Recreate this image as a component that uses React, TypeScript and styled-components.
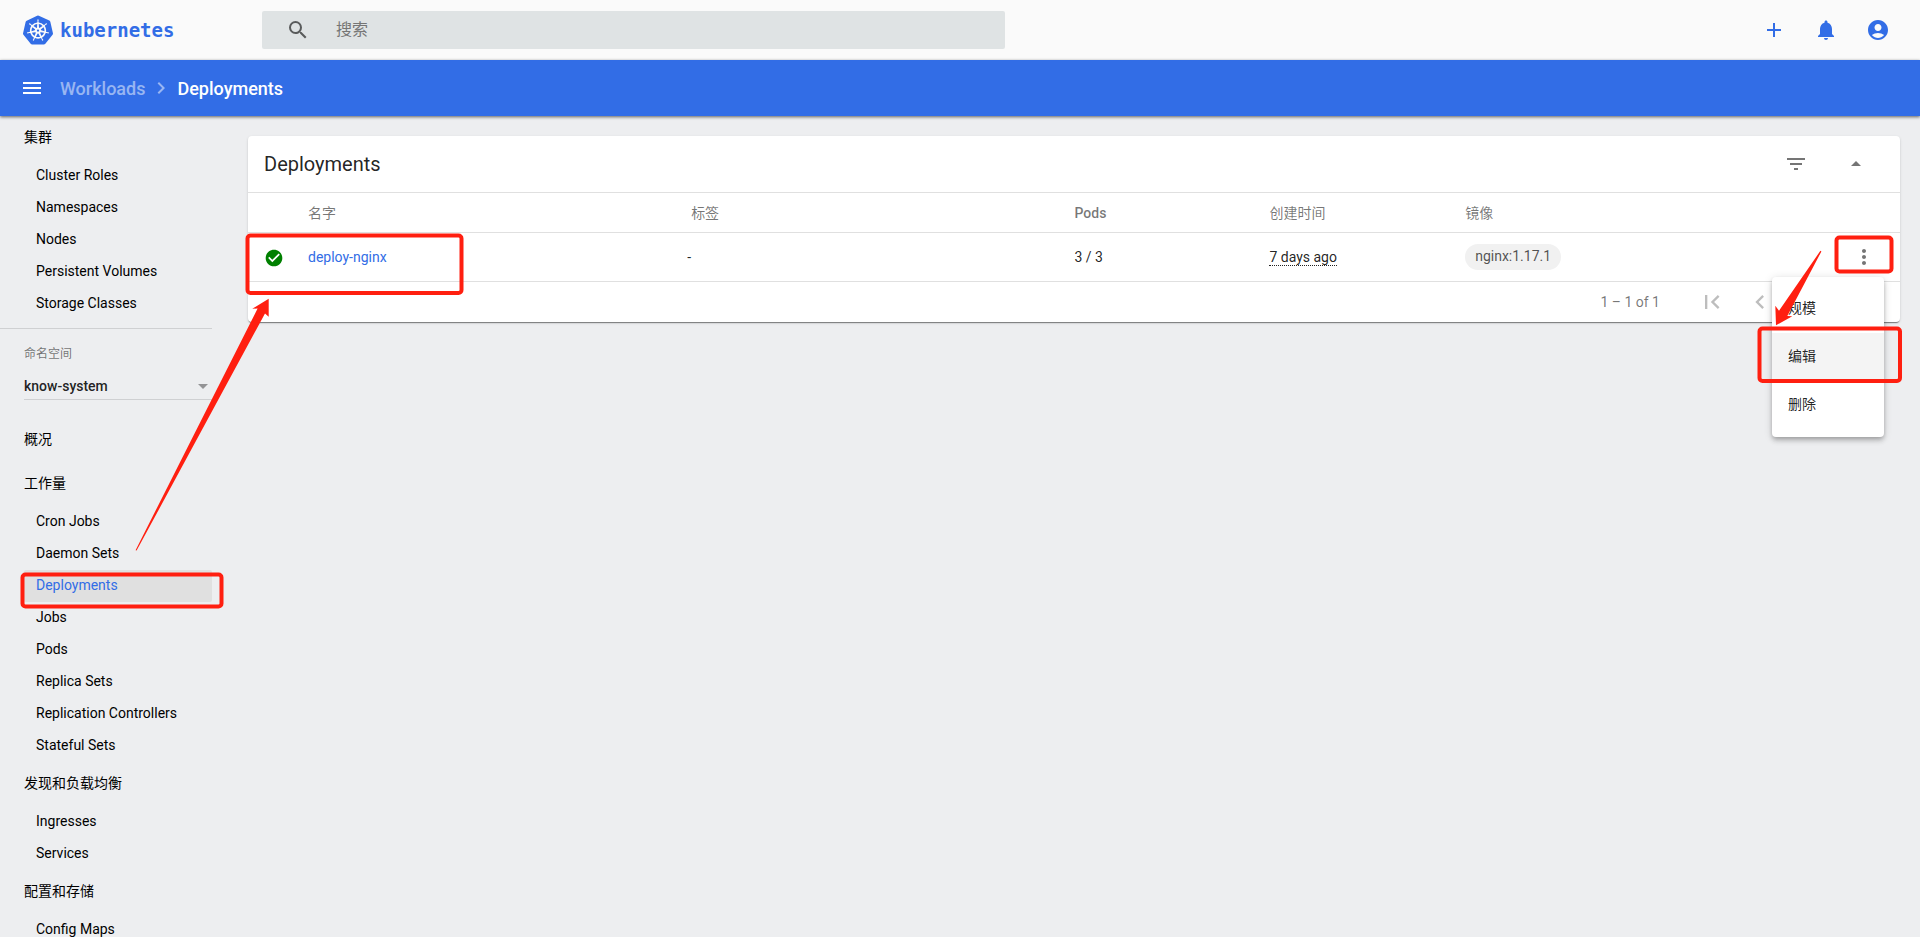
import React from 'react';
import styled, { createGlobalStyle } from 'styled-components';
import {
  MdAccountCircle,
  MdAdd,
  MdArrowDropDown,
  MdArrowDropUp,
  MdCheckCircle,
  MdChevronLeft,
  MdChevronRight,
  MdFilterList,
  MdFirstPage,
  MdLastPage,
  MdMenu,
  MdMoreVert,
  MdNotifications,
  MdSearch,
} from 'react-icons/md';
import { SiKubernetes } from 'react-icons/si';

const primary = '#326de6';
const marker = '#ff1f10';
const border = '#e0e0e0';
const secondaryText = 'rgba(0, 0, 0, 0.54)';

const GlobalStyle = createGlobalStyle`
  *, *::before, *::after { box-sizing: border-box; }
  body {
    margin: 0;
    background: #edeef0;
    color: rgba(0, 0, 0, 0.87);
    font-family: Roboto, "Noto Sans CJK SC", sans-serif;
    font-size: 14px;
    line-height: 20px;
  }
  button, input, select { font: inherit; color: inherit; }
`;

const Page = styled.div`
  position: relative;
  display: flex;
  flex-direction: column;
  height: 100vh;
  overflow: hidden;
`;

const TopBar = styled.header`
  display: flex;
  flex: none;
  align-items: center;
  height: 60px;
  padding: 0 16px 0 23px;
  background: #fafafa;
`;

const Brand = styled.a`
  display: flex;
  flex: none;
  align-items: center;
  gap: 7px;
  width: 239px;
  color: ${primary};
  font: bold 19px/24px "DejaVu Sans Mono", monospace;
  text-decoration: none;
`;

const SearchBox = styled.label`
  display: flex;
  flex: 0 1 743px;
  align-items: center;
  gap: 26px;
  height: 38px;
  padding: 0 24px;
  border-radius: 2px;
  background: #dfe3e4;
  color: rgba(0, 0, 0, 0.6);
`;

const SearchInput = styled.input`
  flex: 1;
  min-width: 0;
  padding: 0;
  border: 0;
  outline: 0;
  background: none;
  font-size: 16px;
  &::placeholder { color: #757575; opacity: 1; }
`;

const TopActions = styled.div`
  display: flex;
  margin-left: auto;
  color: ${primary};
`;

const IconButton = styled.button<{ $width?: number }>`
  display: flex;
  flex: none;
  align-items: center;
  justify-content: center;
  width: ${({ $width = 40 }) => $width}px;
  height: 40px;
  padding: 0;
  border: 0;
  background: none;
  color: inherit;
  cursor: pointer;
  &:disabled { color: rgba(0, 0, 0, 0.26); cursor: default; }
`;

const ActionBar = styled.div`
  position: relative;
  display: flex;
  flex: none;
  align-items: center;
  height: 56px;
  padding: 0 12px;
  background: ${primary};
  color: #fff;
  box-shadow: 0 1px 3px rgba(0, 0, 0, 0.6);
`;

const Breadcrumbs = styled.nav`
  display: flex;
  align-items: center;
  gap: 4px;
  margin-left: 8px;
  font-size: 18px;
  font-weight: 500;
  color: rgba(255, 255, 255, 0.5);
`;

const Crumb = styled.a<{ $current?: boolean }>`
  padding-top: 2px;
  color: ${({ $current }) => ($current ? '#fff' : 'inherit')};
  text-decoration: none;
`;

const Body = styled.div`
  display: flex;
  flex: 1;
  min-height: 0;
`;

const Sidebar = styled.nav`
  flex: none;
  width: 228px;
  padding-right: 16px;
  overflow-y: auto;
  scrollbar-width: none;
  color: #000;
`;

const GroupTitle = styled.a`
  display: block;
  padding: 0 0 2px 24px;
  line-height: 42px;
  color: inherit;
  text-decoration: none;
`;

const NavLink = styled.a<{ $active?: boolean }>`
  display: block;
  margin-left: 24px;
  padding: 0 0 2px 12px;
  border-radius: 2px;
  line-height: 30px;
  background: ${({ $active }) => ($active ? '#e0e0e0' : 'none')};
  color: ${({ $active }) => ($active ? primary : 'inherit')};
  text-decoration: none;
`;

const NamespaceField = styled.div`
  display: flex;
  flex-direction: column;
  margin: 8px 0 18px;
  padding: 15px 0 0 24px;
  border-top: 1px solid #cfd0d2;
`;

const NamespaceLabel = styled.label`
  color: ${secondaryText};
  font-size: 12px;
`;

const SelectWrap = styled.div`
  display: flex;
  align-items: center;
  margin-top: 8px;
  border-bottom: 1px solid #cfd0d2;
  color: ${secondaryText};
`;

const NamespaceSelect = styled.select`
  flex: 1;
  height: 27px;
  margin-right: -24px;
  padding: 0 24px 0 0;
  border: 0;
  outline: 0;
  appearance: none;
  background: none;
  color: rgba(0, 0, 0, 0.87);
  font-weight: 500;
`;

const SelectArrow = styled(MdArrowDropDown)`
  flex: none;
  margin-right: -3px;
  opacity: 0.7;
  pointer-events: none;
`;

const Content = styled.main`
  flex: 1;
  min-width: 0;
  padding: 20px;
`;

const Card = styled.section`
  border-radius: 4px;
  background: #fff;
  box-shadow: 0 2px 1px -1px rgba(0, 0, 0, 0.35), 0 1px 1px rgba(0, 0, 0, 0.14),
    0 1px 3px rgba(0, 0, 0, 0.12);
`;

const CardHeader = styled.header`
  display: flex;
  align-items: center;
  height: 57px;
  padding: 0 14px 0 16px;
  border-bottom: 1px solid ${border};
  color: ${secondaryText};
`;

const CardTitle = styled.h1`
  margin: 0 auto 0 0;
  color: rgba(0, 0, 0, 0.87);
  font-size: 20px;
  font-weight: 400;
  line-height: 24px;
`;

const Table = styled.table`
  width: 100%;
  border-collapse: separate;
  border-spacing: 0;
  table-layout: fixed;
`;

const Th = styled.th<{ $width?: string; $inset?: boolean }>`
  width: ${({ $width = 'auto' }) => $width};
  height: 40px;
  padding: 0 0 0 ${({ $inset }) => ($inset ? 4 : 0)}px;
  border-bottom: 1px solid ${border};
  color: ${secondaryText};
  font-weight: 500;
  text-align: left;
  &:lang(zh) { font-weight: 400; }
`;

const Td = styled.td`
  height: 49px;
  padding: 0;
  border-bottom: 1px solid ${border};
`;

const Status = styled(MdCheckCircle)`
  display: block;
  margin: 2px 0 0 16px;
  color: #008000;
`;

const NameLink = styled.a`
  color: ${primary};
  text-decoration: none;
`;

const Age = styled.span`
  border-bottom: 1px dotted currentColor;
  line-height: 16px;
  display: inline-block;
`;

const Chip = styled.span`
  display: inline-block;
  padding: 0 10px 2px;
  border-radius: 13px;
  background: #f1f1f1;
  color: rgba(0, 0, 0, 0.68);
  line-height: 24px;
`;

const RowActions = styled.div`
  position: relative;
  width: 40px;
  color: ${secondaryText};
`;

const Menu = styled.div`
  position: absolute;
  z-index: 1;
  top: 100%;
  right: 0;
  width: 112px;
  padding: 8px 0;
  border-radius: 4px;
  background: #fff;
  box-shadow: 0 2px 4px -1px rgba(0, 0, 0, 0.2), 0 4px 5px rgba(0, 0, 0, 0.14),
    0 1px 10px rgba(0, 0, 0, 0.12);
`;

const MenuItem = styled.button<{ $hovered?: boolean }>`
  display: block;
  width: 100%;
  height: 48px;
  padding: 0 16px 2px;
  border: 0;
  background: ${({ $hovered }) => ($hovered ? '#f4f4f4' : 'none')};
  color: rgba(0, 0, 0, 0.87);
  text-align: left;
  cursor: pointer;
`;

const Paginator = styled.footer`
  display: flex;
  align-items: center;
  justify-content: flex-end;
  height: 40px;
  padding-right: 20px;
  color: ${secondaryText};
`;

const PageRange = styled.span`
  margin-right: 28px;
`;

const Markers = styled.svg<{ $side: 'left' | 'right' }>`
  position: absolute;
  z-index: 2;
  top: 116px;
  ${({ $side }) => $side}: 0;
  fill: ${marker};
  pointer-events: none;
`;

const MarkerBox = styled.rect`
  fill: none;
  stroke: ${marker};
  stroke-width: 4px;
`;

const clusterLinks = ['Cluster Roles', 'Namespaces', 'Nodes', 'Persistent Volumes', 'Storage Classes'];

const groups = [
  { title: '概况', links: [] },
  {
    title: '工作量',
    links: [
      'Cron Jobs',
      'Daemon Sets',
      'Deployments',
      'Jobs',
      'Pods',
      'Replica Sets',
      'Replication Controllers',
      'Stateful Sets',
    ],
  },
  { title: '发现和负载均衡', links: ['Ingresses', 'Services'] },
  { title: '配置和存储', links: ['Config Maps'] },
];

const NavGroup = ({ title, links }: { title: string; links: string[] }) => (
  <div>
    <GroupTitle href="#">{title}</GroupTitle>
    {links.map((link) => (
      <NavLink key={link} href="#" $active={link === 'Deployments'}>
        {link}
      </NavLink>
    ))}
  </div>
);

export default function App() {
  return (
    <Page>
      <GlobalStyle />
      <TopBar>
        <Brand href="#">
          <SiKubernetes size={30} />
          kubernetes
        </Brand>
        <SearchBox>
          <MdSearch size={24} />
          <SearchInput type="text" placeholder="搜索" aria-label="搜索" />
        </SearchBox>
        <TopActions>
          <IconButton $width={52} aria-label="Create">
            <MdAdd size={24} />
          </IconButton>
          <IconButton $width={52} aria-label="Notifications">
            <MdNotifications size={24} />
          </IconButton>
          <IconButton $width={52} aria-label="Account">
            <MdAccountCircle size={24} />
          </IconButton>
        </TopActions>
      </TopBar>

      <ActionBar>
        <IconButton aria-label="Menu">
          <MdMenu size={24} />
        </IconButton>
        <Breadcrumbs>
          <Crumb href="#">Workloads</Crumb>
          <MdChevronRight size={24} />
          <Crumb href="#" $current>
            Deployments
          </Crumb>
        </Breadcrumbs>
      </ActionBar>

      <Body>
        <Sidebar>
          <NavGroup title="集群" links={clusterLinks} />
          <NamespaceField>
            <NamespaceLabel htmlFor="namespace">命名空间</NamespaceLabel>
            <SelectWrap>
              <NamespaceSelect id="namespace">
                <option>know-system</option>
              </NamespaceSelect>
              <SelectArrow size={24} />
            </SelectWrap>
          </NamespaceField>
          {groups.map((group) => (
            <NavGroup key={group.title} {...group} />
          ))}
        </Sidebar>

        <Content>
          <Card>
            <CardHeader>
              <CardTitle>Deployments</CardTitle>
              <IconButton $width={60} aria-label="Filter">
                <MdFilterList size={24} />
              </IconButton>
              <IconButton $width={60} aria-label="Collapse">
                <MdArrowDropUp size={24} />
              </IconButton>
            </CardHeader>
            <Table>
              <thead>
                <tr>
                  <Th $width="60px" />
                  <Th $width="22.95%" lang="zh">名字</Th>
                  <Th $width="23.45%" $inset lang="zh">标签</Th>
                  <Th $width="11.8%">Pods</Th>
                  <Th $width="11.85%" lang="zh">创建时间</Th>
                  <Th lang="zh">镜像</Th>
                  <Th $width="56px" />
                </tr>
              </thead>
              <tbody>
                <tr>
                  <Td>
                    <Status size={20} />
                  </Td>
                  <Td>
                    <NameLink href="#">deploy-nginx</NameLink>
                  </Td>
                  <Td>-</Td>
                  <Td>3 / 3</Td>
                  <Td>
                    <Age>7 days ago</Age>
                  </Td>
                  <Td>
                    <Chip>nginx:1.17.1</Chip>
                  </Td>
                  <Td>
                    <RowActions>
                      <IconButton aria-label="Actions">
                        <MdMoreVert size={24} />
                      </IconButton>
                      <Menu role="menu">
                        <MenuItem role="menuitem">规模</MenuItem>
                        <MenuItem role="menuitem" $hovered>
                          编辑
                        </MenuItem>
                        <MenuItem role="menuitem">删除</MenuItem>
                      </Menu>
                    </RowActions>
                  </Td>
                </tr>
              </tbody>
            </Table>
            <Paginator>
              <PageRange>1 – 1 of 1</PageRange>
              <IconButton $width={48} aria-label="First page" disabled>
                <MdFirstPage size={28} />
              </IconButton>
              <IconButton $width={48} aria-label="Previous page" disabled>
                <MdChevronLeft size={28} />
              </IconButton>
              <IconButton $width={48} aria-label="Next page" disabled>
                <MdChevronRight size={28} />
              </IconButton>
              <IconButton $width={48} aria-label="Last page" disabled>
                <MdLastPage size={28} />
              </IconButton>
            </Paginator>
          </Card>
        </Content>
      </Body>

      <Markers $side="left" width="480" height="500" viewBox="0 116 480 500" aria-hidden="true">
        <MarkerBox x="247.5" y="235.5" width="214" height="57.5" rx="3" />
        <MarkerBox x="22.5" y="574.5" width="199" height="32" rx="3" />
        <path d="M268.7 298.7 L252.3 308.7 L257.6 308.5 L135.6 550.2 L136.6 550.6 L265 313.5 L268.7 316.8 Z" />
      </Markers>
      <Markers $side="right" width="180" height="290" viewBox="1740 116 180 290" aria-hidden="true">
        <MarkerBox x="1836.5" y="237.5" width="55" height="34" rx="3" />
        <MarkerBox x="1759.5" y="328.5" width="140.5" height="52.5" rx="3" />
        <path d="M1776 325.3 L1775.3 305.7 L1779 310.7 L1820.4 250.8 L1821.4 251.4 L1787.3 316 L1792.3 316.3 Z" />
      </Markers>
    </Page>
  );
}
